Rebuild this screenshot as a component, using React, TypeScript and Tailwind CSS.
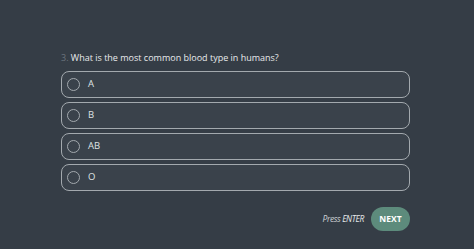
import { useState } from 'react'

const options = ['A', 'B', 'AB', 'O']

export default function App() {
  const [selected, setSelected] = useState<string | null>(null)

  return (
    <div
      className="h-[249px] w-[474px] bg-[#353d46] pt-[51px] pl-[61px]"
      style={{ fontFamily: '"Open Sans", sans-serif' }}
    >
      <div className="w-[349px]">
        <p className="text-[9px] leading-[14px] text-[#e8eaec]">
          <span className="text-[#6b747d]">3.</span> What is the most common blood type in humans?
        </p>
        <div className="mt-[6px] flex flex-col gap-[4px]">
          {options.map((opt) => (
            <button
              key={opt}
              onClick={() => setSelected(opt)}
              className="flex h-[27px] items-center rounded-[8px] border border-[#a3a9ae] bg-[#3a424b] pl-[5px] text-left"
            >
              <span
                className={`h-[13px] w-[13px] rounded-full border border-[#a3a9ae] ${
                  selected === opt ? 'bg-[#5d8b7c]' : ''
                }`}
              />
              <span className="ml-[8px] text-[9.5px] text-[#dfe2e5]">{opt}</span>
            </button>
          ))}
        </div>
        <div className="mt-[16px] flex items-center justify-end gap-[7px]">
          <span className="text-[8.5px] italic tracking-[-0.4px] text-[#c9cdd1]">
            Press <span className="text-[#e6e8ea]">ENTER</span>
          </span>
          <button className="h-[24px] w-[39px] rounded-full bg-[#5d8b7c] text-[8.5px] font-bold text-white">
            NEXT
          </button>
        </div>
      </div>
    </div>
  )
}
